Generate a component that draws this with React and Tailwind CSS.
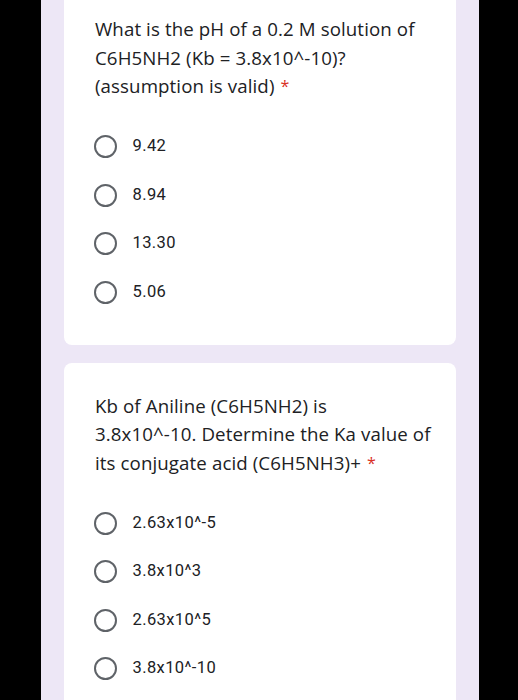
import React from 'react';

const questions = [
    {
        lines: ['What is the pH of a 0.2 M solution of', 'C6H5NH2 (Kb = 3.8x10^-10)?', '(assumption is valid)'],
        options: ['9.42', '8.94', '13.30', '5.06'],
    },
    {
        lines: ['Kb of Aniline (C6H5NH2) is', '3.8x10^-10. Determine the Ka value of', 'its conjugate acid (C6H5NH3)+'],
        options: ['2.63x10^-5', '3.8x10^3', '2.63x10^5', '3.8x10^-10'],
    },
];

const Radio = () => (
    <div className="w-[23px] h-[23px] rounded-full border-[2.5px] border-[#5f6368] shrink-0" />
);

const QuestionCard = ({ lines, options }) => (
    <div className="bg-white rounded-lg pt-[29px] pb-[28px] pl-[31px] pr-[20px]">
        <div className="text-[18.7px] leading-[28.5px] tracking-[0.1px] text-[#202124] font-['Open_Sans',sans-serif]">
            {lines.map((line, i) => (
                <div key={i} className="whitespace-nowrap">
                    {line}
                    {i === lines.length - 1 && (
                        <span className="text-[#d93025] text-[16px] ml-[6px] align-top">*</span>
                    )}
                </div>
            ))}
        </div>
        <div className="mt-[22px] flex flex-col">
            {options.map((opt) => (
                <div key={opt} className="h-[48.5px] flex items-center gap-[16px] -ml-[1.5px]">
                    <Radio />
                    <span className="text-[16.5px] tracking-[0.4px] text-[#202124] font-['Roboto',sans-serif]">{opt}</span>
                </div>
            ))}
        </div>
    </div>
);

export default function App() {
    return (
        <div className="w-[518px] h-[700px] bg-black overflow-hidden flex">
            <div className="ml-[41px] w-[438px] h-full bg-[#ede7f6] px-[23px] overflow-hidden">
                <div className="-mt-[14px] flex flex-col gap-[18px]">
                    {questions.map((q, i) => (
                        <QuestionCard key={i} {...q} />
                    ))}
                </div>
            </div>
        </div>
    );
}
